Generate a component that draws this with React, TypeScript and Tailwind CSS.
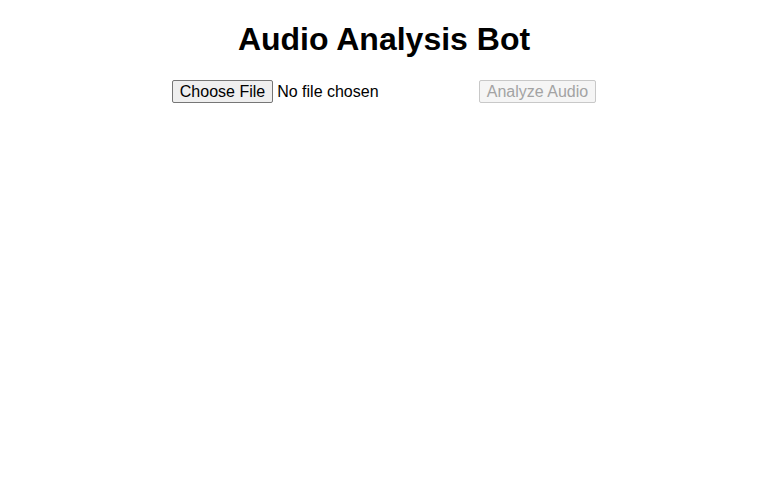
export default function App() {
  return (
    <div className="min-h-screen bg-white text-black font-['Liberation_Sans',Arial,sans-serif]">
      <main className="flex flex-col items-center">
        <h1 className="mt-[21px] mb-[22px] text-[32px] leading-[37px] font-bold">Audio Analysis Bot</h1>

        <div className="flex items-center gap-[4px]">
          <input
            type="file"
            accept="audio/*"
            className="w-[303px] h-[23px] text-[16px] leading-[18px] file:mr-[4px] file:h-[23px] file:px-[7px] file:border file:border-[#767676] file:rounded-[2px] file:bg-[#efefef] file:text-black"
          />
          <button
            disabled
            className="h-[23px] px-[7px] border border-[#c8c8c8] rounded-[2px] bg-[#f5f5f5] text-[#a3a3a3] text-[16px] leading-[18px]"
          >
            Analyze Audio
          </button>
        </div>
      </main>
    </div>
  );
}
